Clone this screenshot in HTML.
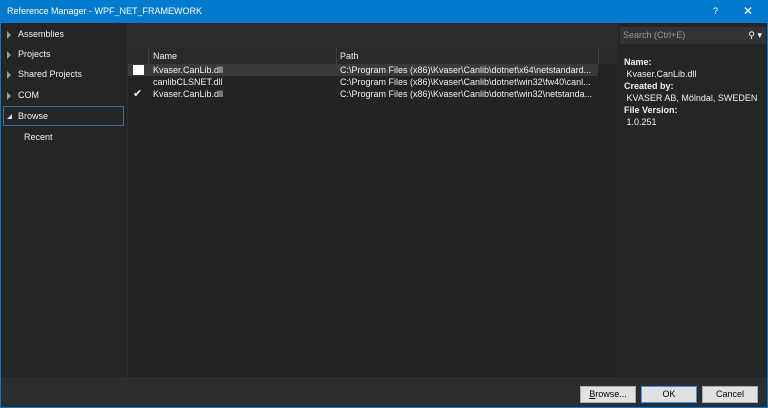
<!DOCTYPE html>
<html><head><style>
*{margin:0;padding:0;box-sizing:border-box}
body{width:768px;height:408px;background:#2d2d30;font-family:"Liberation Sans",sans-serif;font-size:9px;color:#f1f1f1;position:relative;overflow:hidden;white-space:nowrap}
.abs{position:absolute}
#win{left:0;top:0;width:768px;height:408px;border:1px solid #007acc}
#title{left:0;top:0;width:768px;height:23px;background:#007acc;color:#fff;font-size:9px;line-height:23px;padding-left:7px}
#left{left:1px;top:23px;width:126px;height:354px;background:#252526}
.it{position:absolute;left:17px;font-size:9px}
.tri{position:absolute;left:-11px;top:2px;width:0;height:0;border-left:4px solid #999;border-top:4px solid transparent;border-bottom:4px solid transparent}
#center{left:128px;top:47px;width:490px;height:330px;background:#232323}
#hdr{left:128px;top:47px;width:490px;height:17px;background:#2a2a2c}
.row{position:absolute;left:128px;width:470px;height:12px;line-height:12px}
.cb{position:absolute;left:5px;top:1px;width:11px;height:10px;background:#fff}
#right{left:618px;top:23px;width:149px;height:354px;background:#252526}
.btn{position:absolute;top:386px;height:17px;background:#e1e1e1;border:1px solid #adadad;color:#000;text-align:center;line-height:15px;font-size:9px}
</style></head><body>
<div id="title" class="abs">Reference Manager - WPF_NET_FRAMEWORK<span style="position:absolute;left:713px">?</span><span style="position:absolute;left:743px;font-size:12px">✕</span></div>
<div id="left" class="abs">
<div class="it" style="top:6px"><span class="tri"></span>Assemblies</div>
<div class="it" style="top:26px"><span class="tri"></span>Projects</div>
<div class="it" style="top:46px"><span class="tri"></span>Shared Projects</div>
<div class="it" style="top:67px"><span class="tri"></span>COM</div>
<div style="position:absolute;left:2px;top:83px;width:121px;height:20px;border:1px solid #3e6e99"></div>
<div class="it" style="top:88px"><span style="position:absolute;left:-11px;top:3px;width:0;height:0;border-right:5px solid #ddd;border-top:5px solid transparent"></span>Browse</div>
<div class="it" style="top:109px;left:23px">Recent</div>
</div>
<div id="center" class="abs"></div>
<div id="hdr" class="abs"><span style="position:absolute;left:25px;top:4px">Name</span><span style="position:absolute;left:212px;top:4px">Path</span>
<div style="position:absolute;left:20px;top:0;width:1px;height:17px;background:#3f3f46"></div>
<div style="position:absolute;left:208px;top:0;width:1px;height:17px;background:#3f3f46"></div>
<div style="position:absolute;left:470px;top:0;width:1px;height:17px;background:#3f3f46"></div></div>
<div class="row" style="top:64px;background:#3a3a3e"><span class="cb"></span><span style="position:absolute;left:25px">Kvaser.CanLib.dll</span><span style="position:absolute;left:212px">C:\Program Files (x86)\Kvaser\Canlib\dotnet\x64\netstandard...</span></div>
<div class="row" style="top:76px"><span style="position:absolute;left:25px">canlibCLSNET.dll</span><span style="position:absolute;left:212px">C:\Program Files (x86)\Kvaser\Canlib\dotnet\win32\fw40\canl...</span></div>
<div class="row" style="top:88px"><span style="position:absolute;left:5px;font-size:11px">✔</span><span style="position:absolute;left:25px">Kvaser.CanLib.dll</span><span style="position:absolute;left:212px">C:\Program Files (x86)\Kvaser\Canlib\dotnet\win32\netstanda...</span></div>
<div id="right" class="abs">
<div style="position:absolute;left:2px;top:4px;width:146px;height:17px;background:#333337;color:#999;padding-left:3px;line-height:17px">Search (Ctrl+E)<span style="position:absolute;right:4px;color:#fff">⚲ ▾</span></div>
<div style="position:absolute;left:6px;top:33px;line-height:12px"><b>Name:</b><br>&nbsp;Kvaser.CanLib.dll<br><b>Created by:</b><br>&nbsp;KVASER AB, Mölndal, SWEDEN<br><b>File Version:</b><br>&nbsp;1.0.251</div>
</div>
<div class="btn" style="left:580px;width:56px"><u>B</u>rowse...</div>
<div class="btn" style="left:641px;width:56px;border-color:#3399ff">OK</div>
<div class="btn" style="left:702px;width:56px">Cancel</div>
<div id="win" class="abs"></div>
</body></html>
